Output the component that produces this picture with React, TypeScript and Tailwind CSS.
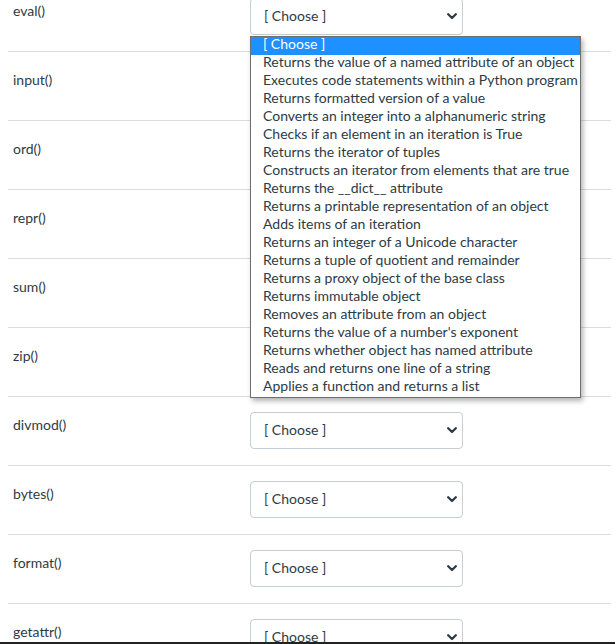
import React from "react";

const labels = ["eval()", "input()", "ord()", "repr()", "sum()", "zip()", "divmod()", "bytes()", "format()", "getattr()"];

const options = [
  "[ Choose ]",
  "Returns the value of a named attribute of an object",
  "Executes code statements within a Python program",
  "Returns formatted version of a value",
  "Converts an integer into a alphanumeric string",
  "Checks if an element in an iteration is True",
  "Returns the iterator of tuples",
  "Constructs an iterator from elements that are true",
  "Returns the __dict__ attribute",
  "Returns a printable representation of an object",
  "Adds items of an iteration",
  "Returns an integer of a Unicode character",
  "Returns a tuple of quotient and remainder",
  "Returns a proxy object of the base class",
  "Returns immutable object",
  "Removes an attribute from an object",
  "Returns the value of a number's exponent",
  "Returns whether object has named attribute",
  "Reads and returns one line of a string",
  "Applies a function and returns a list",
];

function Chevron() {
  return (
    <svg width="10" height="7" viewBox="0 0 10 7" className="block">
      <path d="M1.2 1.3 L5 5 L8.8 1.3" fill="none" stroke="#2d3b45" strokeWidth="2.3" strokeLinecap="round" strokeLinejoin="round" />
    </svg>
  );
}

function FakeSelect() {
  return (
    <div className="mt-[15px] flex h-[37px] w-[213px] items-center justify-between rounded-[4px] border border-[#c7cdd1] bg-white pl-[13px] pr-[5px] text-[14px] text-[#2d3b45]">
      <span className="pb-[2px] leading-[18px]">[ Choose ]</span>
      <Chevron />
    </div>
  );
}

export default function App() {
  return (
    <div className="relative h-[644px] w-[615px] overflow-hidden bg-white font-['Lato',sans-serif] text-[#2d3b45]">
      <div className="mt-[-17px] pl-2 pr-1">
        {labels.map((l) => (
          <div key={l} className="flex h-[69px] border-b border-[#dcdcdc]">
            <div className="w-[242px] pl-[5px] pt-[18px] text-[14px] leading-[20px]">{l}</div>
            <FakeSelect />
          </div>
        ))}
      </div>

      <div className="absolute left-[250px] top-[36px] w-[331px] border border-[#6f6f6f] bg-white shadow-[2px_3px_5px_rgba(0,0,0,0.3)]">
        {options.map((o, i) => (
          <div
            key={o}
            className={
              i === 0
                ? "h-[18px] bg-[#1e90ff] pl-[12px] text-[14px] leading-[14px] text-white whitespace-nowrap"
                : "h-[18px] pl-[12px] text-[14px] leading-[14px] text-[#2d3b45] whitespace-nowrap"
            }
          >
            {o}
          </div>
        ))}
      </div>

      <div className="absolute bottom-0 left-0 h-[2px] w-full bg-[#222]" />
    </div>
  );
}
